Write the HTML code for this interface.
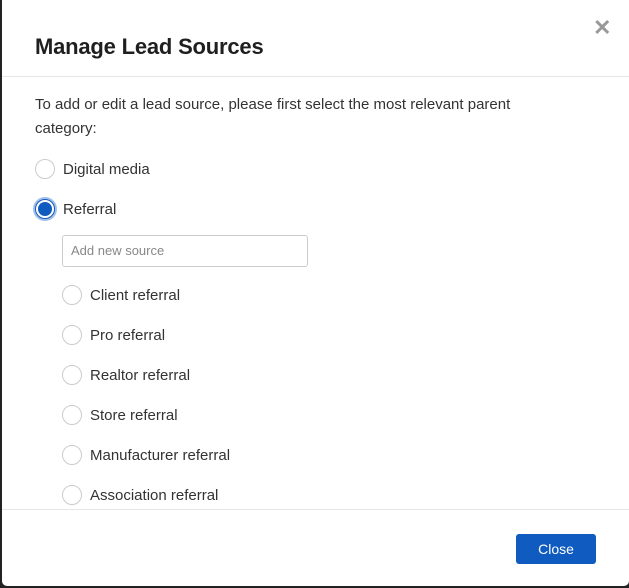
<!DOCTYPE html>
<html><head><style>
html,body{margin:0;padding:0;width:629px;height:588px;background:#222;overflow:hidden}
.m{position:absolute;left:2px;top:0;width:627px;height:586px;background:#fff;border-radius:0 0 5px 5px;font-family:"Liberation Sans",sans-serif;color:#222}
h1{position:absolute;left:33px;top:34px;margin:0;font-size:22px;font-weight:bold;color:#1f1f1f;letter-spacing:-0.2px}
.x{position:absolute;left:591px;top:15px;font-size:22px;color:#999;font-weight:bold}
.hl{position:absolute;left:0;right:0;top:76px;border-top:1px solid #e6e6e6}
.fl{position:absolute;left:0;right:0;top:509px;border-top:1px solid #e6e6e6}
.p{position:absolute;left:33px;top:93px;font-size:15px;line-height:24px;color:#333;width:510px}
.r{position:absolute;font-size:15px;color:#333;height:20px;line-height:20px}
.r i{position:absolute;left:0;top:0;width:18px;height:18px;border:1px solid #ccc;border-radius:50%;box-sizing:content-box}
.r span{position:absolute;left:28px;top:1px;white-space:nowrap}
.sel i{border:1px solid #1a5bbd;background:#fff;box-shadow:0 0 0 2px #9fc0ea}
.sel i:after{content:"";position:absolute;left:2px;top:2px;width:14px;height:14px;border-radius:50%;background:#0f5bbf}
.in{position:absolute;left:60px;top:235px;width:236px;height:30px;border:1px solid #ccc;border-radius:3px;font-size:13px;color:#888;line-height:30px;padding-left:8px;box-sizing:content-box}
.b{position:absolute;left:514px;top:534px;width:80px;height:30px;background:#0f5bbf;color:#fff;border-radius:3px;text-align:center;line-height:30px;font-size:14px}
</style></head><body><div class="m">
<h1>Manage Lead Sources</h1><div class="x">✕</div>
<div class="hl"></div>
<div class="p">To add or edit a lead source, please first select the most relevant parent category:</div>
<div class="r" style="left:33px;top:159px"><i></i><span>Digital media</span></div>
<div class="r sel" style="left:33px;top:199px"><i></i><span>Referral</span></div>
<div class="in">Add new source</div>
<div class="r" style="left:60px;top:285px"><i></i><span>Client referral</span></div>
<div class="r" style="left:60px;top:325px"><i></i><span>Pro referral</span></div>
<div class="r" style="left:60px;top:365px"><i></i><span>Realtor referral</span></div>
<div class="r" style="left:60px;top:405px"><i></i><span>Store referral</span></div>
<div class="r" style="left:60px;top:445px"><i></i><span>Manufacturer referral</span></div>
<div class="r" style="left:60px;top:485px"><i></i><span>Association referral</span></div>
<div class="fl"></div>
<div class="b">Close</div>
</div></body></html>
